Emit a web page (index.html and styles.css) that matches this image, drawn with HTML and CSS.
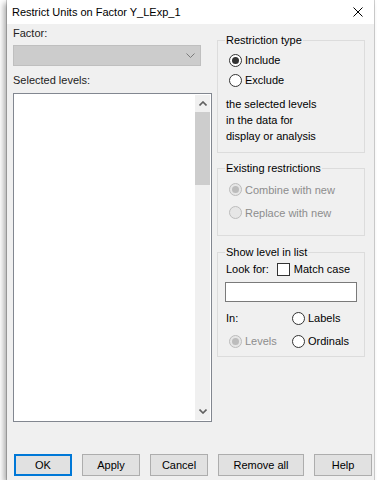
FILE: index.html
```html
<!DOCTYPE html>
<html>
<head>
<meta charset="utf-8">
<link rel="stylesheet" href="styles.css">
</head>
<body>
<div class="win">
  <div class="titlebar">
    <span class="title">Restrict Units on Factor Y_LExp_1</span>
    <svg class="close" width="10" height="10" viewBox="0 0 10 10"><path d="M0.5 0.5 L9.5 9.5 M9.5 0.5 L0.5 9.5" stroke="#000" stroke-width="1" fill="none"/></svg>
  </div>
  <div class="content">
    <div class="leftcol">
      <div class="lbl first">Factor:</div>
      <div class="combo">
        <svg width="9" height="5" viewBox="0 0 9 5"><path d="M0.5 0.5 L4.5 4.5 L8.5 0.5" stroke="#7a7a7a" stroke-width="1" fill="none"/></svg>
      </div>
      <div class="lbl second">Selected levels:</div>
      <div class="list">
        <div class="scroll">
          <div class="arrow"><svg width="8" height="5" viewBox="0 0 8 5"><path d="M0.5 4.5 L4 1 L7.5 4.5" stroke="#606060" stroke-width="1.6" fill="none"/></svg></div>
          <div class="thumb"></div>
          <div class="track"></div>
          <div class="arrow"><svg width="8" height="5" viewBox="0 0 8 5"><path d="M0.5 0.5 L4 4 L7.5 0.5" stroke="#606060" stroke-width="1.6" fill="none"/></svg></div>
        </div>
      </div>
    </div>
    <div class="rightcol">
      <fieldset class="grp g1">
        <legend>Restriction type</legend>
        <div class="row r1"><span class="radio on"></span><span>Include</span></div>
        <div class="row"><span class="radio"></span><span>Exclude</span></div>
        <div class="desc">the selected levels<br>in the data for<br>display or analysis</div>
      </fieldset>
      <fieldset class="grp g2">
        <legend>Existing restrictions</legend>
        <div class="row r2 dis"><span class="radio on"></span><span>Combine with new</span></div>
        <div class="row r2 dis"><span class="radio"></span><span>Replace with new</span></div>
      </fieldset>
      <fieldset class="grp g3">
        <legend>Show level in list</legend>
        <div class="row look"><span>Look for:</span><span class="check"></span><span>Match case</span></div>
        <div class="input"></div>
        <div class="grid2">
          <div class="row"><span class="intext">In:</span></div>
          <div class="row"><span class="radio"></span><span>Labels</span></div>
          <div class="row dis"><span class="radio on"></span><span>Levels</span></div>
          <div class="row"><span class="radio"></span><span>Ordinals</span></div>
        </div>
      </fieldset>
    </div>
  </div>
  <div class="buttons">
    <div class="btn default">OK</div>
    <div class="btn">Apply</div>
    <div class="btn">Cancel</div>
    <div class="btn wide">Remove all</div>
    <div class="btn">Help</div>
  </div>
</div>
</body>
</html>
```
FILE: styles.css
```css
* { box-sizing: border-box; }
html, body { margin: 0; padding: 0; background: #fff; }
body {
  font-family: "Liberation Sans", Arial, sans-serif;
  font-size: 11px;
  color: #000;
  padding-left: 7px;
}
.win {
  width: 367px;
  height: 480px;
  background: #f0f0f0;
  box-shadow: 0 0 0 1px rgba(0,0,0,0.18), -3px 3px 6px rgba(0,0,0,0.35);
  display: flex;
  flex-direction: column;
}
.titlebar {
  height: 24px;
  background: #fff;
  display: flex;
  align-items: center;
  justify-content: space-between;
  padding: 0 11px 0 5px;
}
.title { font-size: 11px; line-height: 14px; }
.close { display: block; }
.content {
  display: grid;
  grid-template-columns: 199px 148px;
  column-gap: 5px;
  padding-left: 6px;
}
.lbl { line-height: 14px; color: #222; }
.lbl.first { margin-top: 2px; }
.lbl.second { margin-top: 7px; }
.combo {
  margin-top: 5px;
  width: 188px;
  height: 21px;
  background: #cccccc;
  border: 1px solid #bfbfbf;
  display: flex;
  align-items: center;
  justify-content: flex-end;
  padding-right: 5px;
}
.combo svg { display: block; }
.list {
  margin-top: 6px;
  height: 329px;
  background: #fff;
  border: 1px solid #828790;
  padding: 1px;
  display: flex;
  justify-content: flex-end;
}
.scroll {
  width: 15px;
  background: #f0f0f0;
  display: flex;
  flex-direction: column;
}
.arrow {
  height: 17px;
  display: flex;
  align-items: center;
  justify-content: center;
}
.arrow svg { display: block; }
.thumb {
  height: 73px;
  background: #cdcdcd;
}
.track { flex: 1; }
.grp {
  margin: 0;
  border: 1px solid #dcdcdc;
  padding: 0 7px 0 8px;
  min-width: 0;
}
.grp legend {
  padding: 0 1px;
  margin-left: -1px;
  line-height: 14px;
}
.g1 { margin-top: 9px; padding-bottom: 8px; }
.g2 { margin-top: 8px; padding-bottom: 11px; }
.g3 { margin-top: 9px; padding-bottom: 5px; }
.row {
  height: 20px;
  display: flex;
  align-items: center;
  white-space: nowrap;
}
.r1 { margin-top: 3px; }
.r2 { height: 23px; }
.g2 .r2:first-of-type { margin-top: 3px; }
.radio {
  width: 13px;
  height: 13px;
  border: 1px solid #333;
  border-radius: 50%;
  background: #fff;
  margin: 0 3px 0 3px;
  display: flex;
  align-items: center;
  justify-content: center;
  flex: none;
}
.radio.on::after {
  content: "";
  width: 7px;
  height: 7px;
  border-radius: 50%;
  background: #333;
}
.dis { color: #8d8d8d; }
.dis .radio { border-color: #bcbcbc; background: #e6e6e6; }
.dis .radio.on::after { background: #bcbcbc; }
.desc {
  margin-top: 6px;
  line-height: 16px;
}
.look .check {
  width: 13px;
  height: 13px;
  border: 1px solid #333;
  background: #fff;
  margin: 0 4px 0 8px;
  flex: none;
}
.input {
  margin: 3px 0 0 -1px;
  width: 132px;
  height: 20px;
  background: #fff;
  border: 1px solid #7a7a7a;
}
.grid2 {
  display: grid;
  grid-template-columns: 63px 1fr;
  row-gap: 3px;
  margin-top: 6px;
}
.intext { margin-left: 0; }
.buttons {
  display: flex;
  gap: 10px;
  padding-left: 7px;
  margin-top: 32px;
}
.btn {
  width: 58px;
  height: 22px;
  background: #e1e1e1;
  border: 1px solid #adadad;
  display: flex;
  align-items: center;
  justify-content: center;
}
.btn.wide { width: 86px; }
.btn.default { border: 2px solid #0078d7; }
```
